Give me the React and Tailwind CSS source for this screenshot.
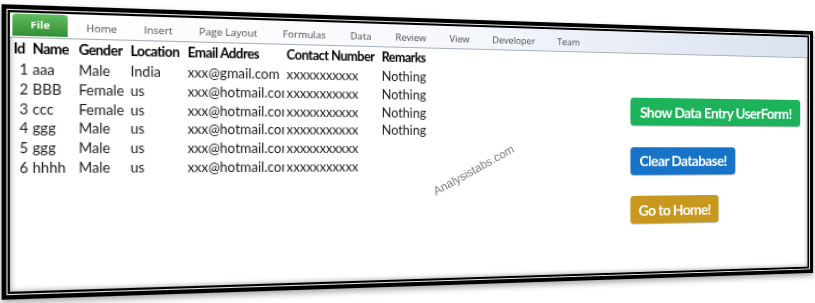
import React from "react";

const rows = [
  ["1", "aaa", "Male", "India", "xxx@gmail.com", "xxxxxxxxxxx", "Nothing"],
  ["2", "BBB", "Female", "us", "xxx@hotmail.com", "xxxxxxxxxxx", "Nothing"],
  ["3", "ccc", "Female", "us", "xxx@hotmail.com", "xxxxxxxxxxx", "Nothing"],
  ["4", "ggg", "Male", "us", "xxx@hotmail.com", "xxxxxxxxxxx", "Nothing"],
  ["5", "ggg", "Male", "us", "xxx@hotmail.com", "xxxxxxxxxxx", ""],
  ["6", "hhhh", "Male", "us", "xxx@hotmail.com", "xxxxxxxxxxx", ""],
];

const tabs = ["Home", "Insert", "Page Layout", "Formulas", "Data", "Review", "View", "Developer", "Team"];

function Row({ cells, header }) {
  const base = header
    ? "flex h-[19px] items-center mt-[1px] font-bold text-black text-[12.5px] tracking-[-0.5px]"
    : "flex h-[17.7px] items-center text-[#1b1b1b] text-[12.7px]";
  return (
    <div className={base}>
      <div className={header ? "w-[16px] whitespace-nowrap" : "w-[16px] pl-[5px] whitespace-nowrap"}>{cells[0]}</div>
      <div className="w-[39.4px] whitespace-nowrap">{cells[1]}</div>
      <div className="w-[45.4px] whitespace-nowrap">{cells[2]}</div>
      <div className="w-[51.2px] whitespace-nowrap">{cells[3]}</div>
      <div className={header ? "w-[92.1px] whitespace-nowrap" : "w-[90.3px] mr-[1.8px] whitespace-nowrap overflow-hidden"}>{cells[4]}</div>
      <div className="w-[92.6px] whitespace-nowrap">{cells[5]}</div>
      <div className="whitespace-nowrap">{cells[6]}</div>
    </div>
  );
}

export default function App() {
  return (
    <div className="w-[815px] h-[303px] overflow-hidden bg-white [perspective:1000px] [perspective-origin:448px_152px] font-['Lato',sans-serif]">
      <div className="ml-[34px] mt-[19px] w-[828px] h-[266px] [transform:rotateY(14deg)] border-[4px] border-black shadow-[0_3px_6px_rgba(0,0,0,0.35)]">
        <div className="h-full w-full border border-[#e8e8e8]">
          <div className="h-full w-full border-2 border-black">
            <div className="relative h-full w-full bg-white shadow-[inset_0_0_4px_1px_rgba(0,0,0,0.3)] flex flex-col">
              {/* Ribbon */}
              <div className="h-[23px] flex items-start border-b border-[#a7b0bc] bg-gradient-to-r from-white via-[#f6f8fb] to-[#d9e2ef]">
                <div className="ml-[2px] mt-[1px] h-[20px] w-[47px] rounded-t-[3px] bg-gradient-to-b from-[#62bb5f] to-[#2f8f34] flex items-center justify-center text-white font-bold text-[9.5px] font-['Open_Sans',sans-serif]">
                  File
                </div>
                <div className="ml-[4px] flex pt-[6px] font-['Open_Sans',sans-serif] text-[9.5px] text-[#4a4a4a]">
                  {tabs.map((t) => (
                    <div key={t} className="px-[12px] whitespace-nowrap leading-[13px]">{t}</div>
                  ))}
                </div>
              </div>
              {/* Body */}
              <div className="flex flex-1">
                <div className="pl-[3px]">
                  <Row header cells={["Id", "Name", "Gender", "Location", "Email Addres", "Contact Number", "Remarks"]} />
                  {rows.map((r) => (
                    <Row key={r[0]} cells={r} />
                  ))}
                </div>
                <div className="ml-auto pr-[9px] pt-[46px] flex flex-col gap-[22.5px] items-start">
                  <div className="h-[29px] w-[201px] rounded-[4px] bg-[#1cb35b] shadow-[0_1px_1px_rgba(0,0,0,0.3)] flex items-center justify-center text-white font-bold text-[16px] tracking-[-0.7px] whitespace-nowrap">
                    Show Data Entry UserForm!
                  </div>
                  <div className="h-[29px] w-[122px] rounded-[4px] bg-[#1673c8] shadow-[0_1px_1px_rgba(0,0,0,0.3)] flex items-center justify-center text-white font-bold text-[16px] tracking-[-0.7px] whitespace-nowrap">
                    Clear Database!
                  </div>
                  <div className="h-[29px] w-[102px] rounded-[4px] bg-[#c8981e] shadow-[0_1px_1px_rgba(0,0,0,0.3)] flex items-center justify-center text-white font-bold text-[16px] tracking-[-0.7px] whitespace-nowrap">
                    Go to Home!
                  </div>
                </div>
              </div>
              <div className="absolute left-[434px] top-[144px] -translate-x-1/2 -translate-y-1/2 -rotate-[28deg] font-['Liberation_Sans',sans-serif] text-[12px] text-[#7a7a7a] whitespace-nowrap">
                Analysistabs.com
              </div>
            </div>
          </div>
        </div>
      </div>
    </div>
  );
}
